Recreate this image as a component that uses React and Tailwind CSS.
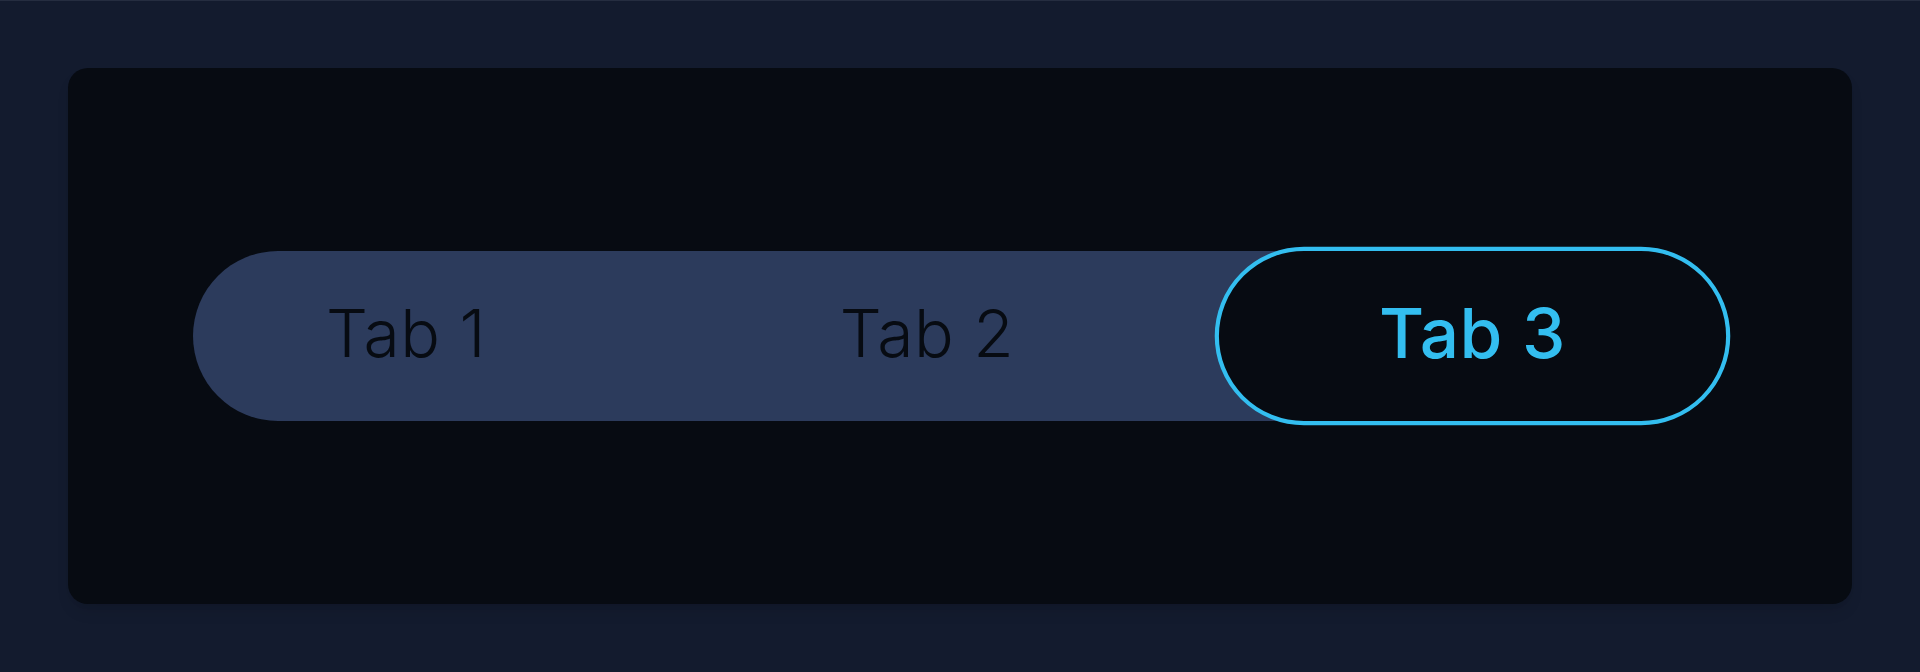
import React, { useState } from "react";

const tabs = [
	{ id: 1, label: "Tab 1", width: "w-[426px]" },
	{ id: 2, label: "Tab 2", width: "w-[608px] pl-[8px]" },
	{ id: 3, label: "Tab 3", width: "w-[491px]" },
];

const App = () => {
	const [active, setActive] = useState(3);

	return (
		<div
			className="h-[672px] w-full bg-[#131b2e] border-t border-[#252d40] px-[68px] pt-[67px] pb-[68px]"
			style={{ fontFamily: "Inter, 'Noto Sans', sans-serif" }}
		>
			<div className="h-full w-full rounded-[20px] bg-[#070b12] shadow-lg flex items-center pl-[125px]">
				<div className="flex h-[170px] w-[1525px] rounded-full bg-[#2c3b5c]">
					{tabs.map((tab) => {
						const isActive = tab.id === active;
						return (
							<button
								key={tab.id}
								onClick={() => setActive(tab.id)}
								className={
									isActive
										? `${tab.width} h-full shrink-0 flex items-center justify-center rounded-full border-[4px] border-[#33bef0] bg-[#070b12] text-[#33bef0] text-[66px] font-medium tracking-[0.5px] scale-105`
										: `${tab.width} h-full shrink-0 flex items-center justify-center text-[#070b12] text-[66px] font-light tracking-[0.5px]`
								}
							>
								<span className="leading-none -mt-[6px]">{tab.label}</span>
							</button>
						);
					})}
				</div>
			</div>
		</div>
	);
};

export default App;
